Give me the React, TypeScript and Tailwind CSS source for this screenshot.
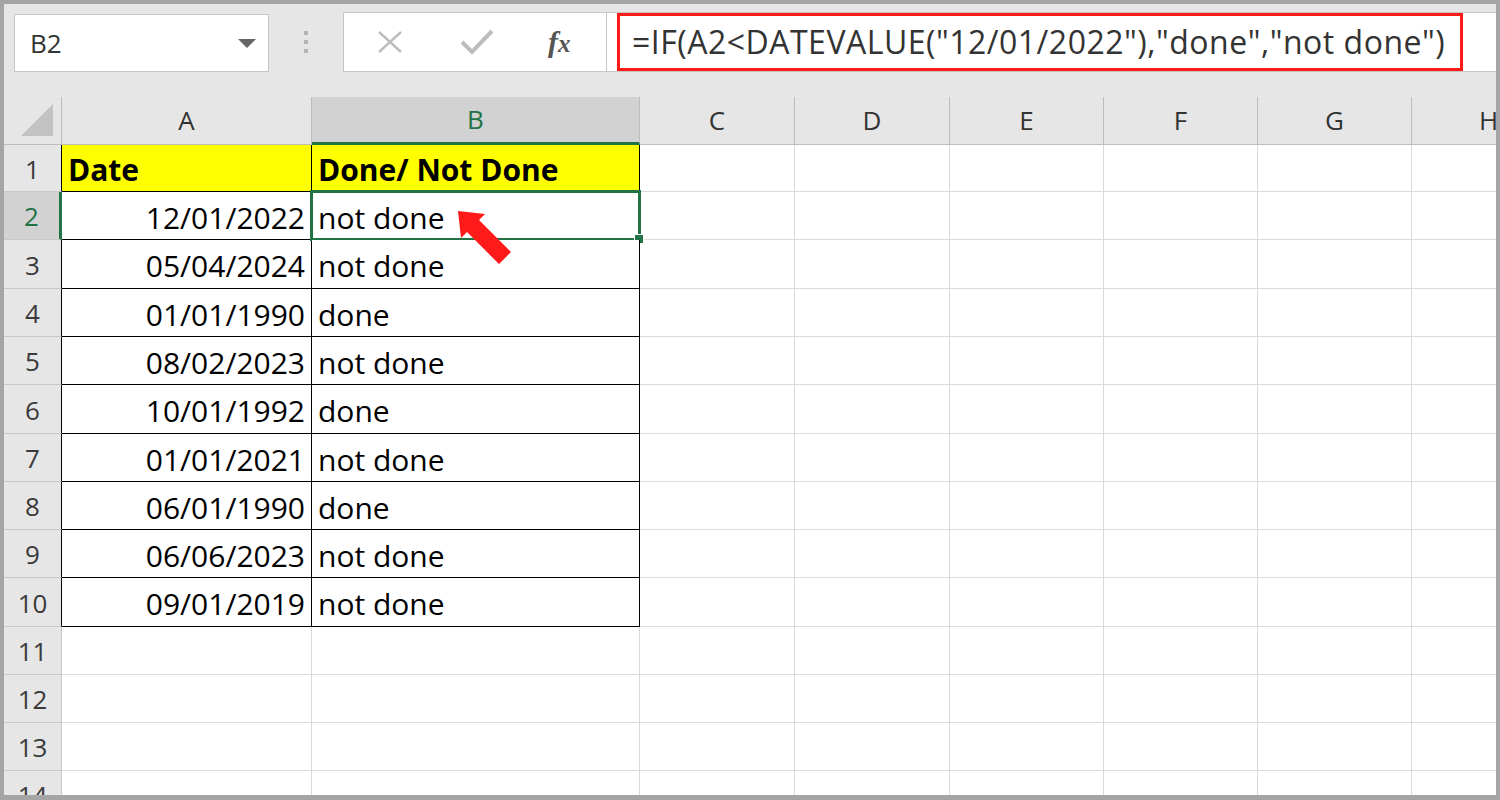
import React from "react";

const dates = [
  "12/01/2022",
  "05/04/2024",
  "01/01/1990",
  "08/02/2023",
  "10/01/1992",
  "01/01/2021",
  "06/01/1990",
  "06/06/2023",
  "09/01/2019",
];
const status = [
  "not done",
  "not done",
  "done",
  "not done",
  "done",
  "not done",
  "done",
  "not done",
  "not done",
];

const extraCols = ["C", "D", "E", "F", "G", "H"];
const extraW = [
  "w-[155px]",
  "w-[155px]",
  "w-[154px]",
  "w-[154px]",
  "w-[154px]",
  "w-[154px]",
];

const rowH: Record<number, string> = {
  1: "h-[47px]",
  2: "h-[48px]",
  3: "h-[49px]",
  4: "h-[48px]",
  5: "h-[48px]",
  6: "h-[49px]",
  7: "h-[48px]",
  8: "h-[48px]",
  9: "h-[48px]",
  10: "h-[49px]",
  11: "h-[48px]",
  12: "h-[48px]",
  13: "h-[48px]",
  14: "h-[48px]",
};

const font = { fontFamily: '"Open Sans", "Noto Sans", sans-serif' };

function RowHeader({ n }: { n: number }) {
  const sel = n === 2;
  const inTable = n >= 1 && n <= 10;
  return (
    <div
      className={
        "w-[58px] shrink-0 h-full flex items-center justify-center pt-[2px] border-b border-b-[#c8c8c8] text-[26px] " +
        (sel
          ? "bg-[#d2d2d2] text-[#217346] border-r-[3px] border-r-[#217346]"
          : inTable
          ? "bg-[#e6e6e6] text-[#3a3a3a] border-r border-r-black"
          : "bg-[#e6e6e6] text-[#3a3a3a] border-r border-r-[#c8c8c8]")
      }
    >
      {n}
    </div>
  );
}

function EmptyCells() {
  return (
    <>
      {extraW.map((w, i) => (
        <div
          key={i}
          className={w + " shrink-0 h-full border-r border-b border-[#dadada] bg-white"}
        />
      ))}
    </>
  );
}

export default function App() {
  const rows = Array.from({ length: 14 }, (_, i) => i + 1);
  return (
    <div
      className="w-[1500px] h-[800px] bg-[#a5a5a5] pt-[4px] pl-[4px] pr-[4px] pb-[5px] relative overflow-hidden"
      style={font}
    >
      <div className="w-full h-full bg-[#e6e6e6] flex flex-col overflow-hidden">
        {/* Formula bar */}
        <div className="h-[93px] shrink-0 flex items-start pt-[8px] pl-[10px]">
          <div className="mt-[2px] w-[255px] h-[58px] bg-white border border-[#c6c6c6] flex items-center pl-[15px] pr-[12px] text-[26px] text-[#333]">
            <span className="flex-1">B2</span>
            <svg width="18" height="9" viewBox="0 0 18 9">
              <polygon points="0,0 18,0 9,9" fill="#666" />
            </svg>
          </div>
          <div className="w-[74px] h-[60px] flex flex-col items-center justify-center gap-[5px]">
            <div className="w-[4px] h-[4px] bg-[#b4b4b4]" />
            <div className="w-[4px] h-[4px] bg-[#b4b4b4]" />
            <div className="w-[4px] h-[4px] bg-[#b4b4b4]" />
          </div>
          <div className="w-[264px] h-[60px] bg-white border border-[#c6c6c6] flex items-center">
            <svg width="26" height="22" viewBox="0 0 26 22" className="ml-[33px]">
              <path d="M2 1 L24 21 M24 1 L2 21" stroke="#bdbdbd" strokeWidth="2.4" fill="none" />
            </svg>
            <svg width="34" height="26" viewBox="0 0 34 26" className="ml-[57px]">
              <path d="M2 13 L12 23 L32 2" stroke="#bdbdbd" strokeWidth="4" fill="none" />
            </svg>
            <span
              className="ml-[54px] text-[30px] italic font-bold text-[#555] leading-none"
              style={{ fontFamily: '"Liberation Serif", serif' }}
            >
              f<span className="text-[25px]">x</span>
            </span>
          </div>
          <div className="flex-1 h-[60px] bg-white border-t border-b border-[#c6c6c6] pl-[10px]">
            <div className="w-[846px] h-full border-[3px] border-[#ff1a1a] flex items-center pl-[12px] text-[32px] text-[#333] tracking-[0.5px] whitespace-nowrap">
              =IF(A2&lt;DATEVALUE("12/01/2022"),"done","not done")
            </div>
          </div>
        </div>

        {/* Column headers */}
        <div className="h-[48px] shrink-0 flex">
          <div className="w-[58px] shrink-0 h-full bg-[#e6e6e6] border-r border-b border-[#bdbdbd] flex items-end justify-end p-[8px]">
            <svg width="32" height="32" viewBox="0 0 32 32">
              <polygon points="32,0 32,32 0,32" fill="#c2c2c2" />
            </svg>
          </div>
          <div className="w-[250px] shrink-0 h-full bg-[#e6e6e6] border-r border-b border-[#bdbdbd] flex items-center justify-center text-[26px] text-[#333]">
            A
          </div>
          <div className="w-[328px] shrink-0 h-full bg-[#d2d2d2] border-r border-r-[#bdbdbd] border-b-[3px] border-b-[#217346] flex items-center justify-center text-[26px] text-[#217346]">
            B
          </div>
          {extraCols.map((c, i) => (
            <div
              key={c}
              className={
                extraW[i] +
                " shrink-0 h-full bg-[#e6e6e6] border-r border-b border-[#bdbdbd] flex items-center justify-center text-[26px] text-[#333]"
              }
            >
              {c}
            </div>
          ))}
        </div>

        {/* Rows */}
        {rows.map((n) => {
          const h = rowH[n];
          if (n === 1) {
            return (
              <div key={n} className={h + " shrink-0 flex"}>
                <RowHeader n={n} />
                <div className="w-[250px] shrink-0 h-full bg-[#ffff00] border-r border-b border-black flex items-center pt-[3px] pl-[6px] text-[30px] font-bold text-black">
                  Date
                </div>
                <div className="w-[328px] shrink-0 h-full bg-[#ffff00] border-r border-b border-black flex items-center pt-[3px] pl-[6px] text-[30px] font-bold text-black">
                  Done/ Not Done
                </div>
                <EmptyCells />
              </div>
            );
          }
          if (n <= 10) {
            const idx = n - 2;
            return (
              <div key={n} className={h + " shrink-0 flex"}>
                <RowHeader n={n} />
                <div className="w-[250px] shrink-0 h-full bg-white border-r border-b border-black flex items-center justify-end pt-[3px] pr-[6px] text-[30px] text-black">
                  {dates[idx]}
                </div>
                <div className="w-[328px] shrink-0 h-full bg-white border-r border-b border-black flex items-center pt-[3px] pl-[6px] text-[30px] text-black relative">
                  {status[idx]}
                  {n === 2 && (
                    <div className="absolute -top-[2px] -left-[2px] -right-[2px] -bottom-[2px] border-[3px] border-[#217346]">
                      <div className="absolute -right-[6px] -bottom-[6px] w-[10px] h-[10px] bg-[#217346] border border-white" />
                    </div>
                  )}
                </div>
                <EmptyCells />
              </div>
            );
          }
          return (
            <div key={n} className={h + " shrink-0 flex"}>
              <RowHeader n={n} />
              <div className="w-[250px] shrink-0 h-full bg-white border-r border-b border-[#dadada]" />
              <div className="w-[328px] shrink-0 h-full bg-white border-r border-b border-[#dadada]" />
              <EmptyCells />
            </div>
          );
        })}
      </div>

      {/* Red annotation arrow */}
      <svg
        className="absolute left-0 top-0 pointer-events-none"
        width="1500"
        height="800"
        viewBox="0 0 1500 800"
      >
        <polygon
          points="458,211 485,214 479,220 511,252 499,264 467,232 461,238"
          fill="#ff1a1a"
        />
      </svg>
    </div>
  );
}
